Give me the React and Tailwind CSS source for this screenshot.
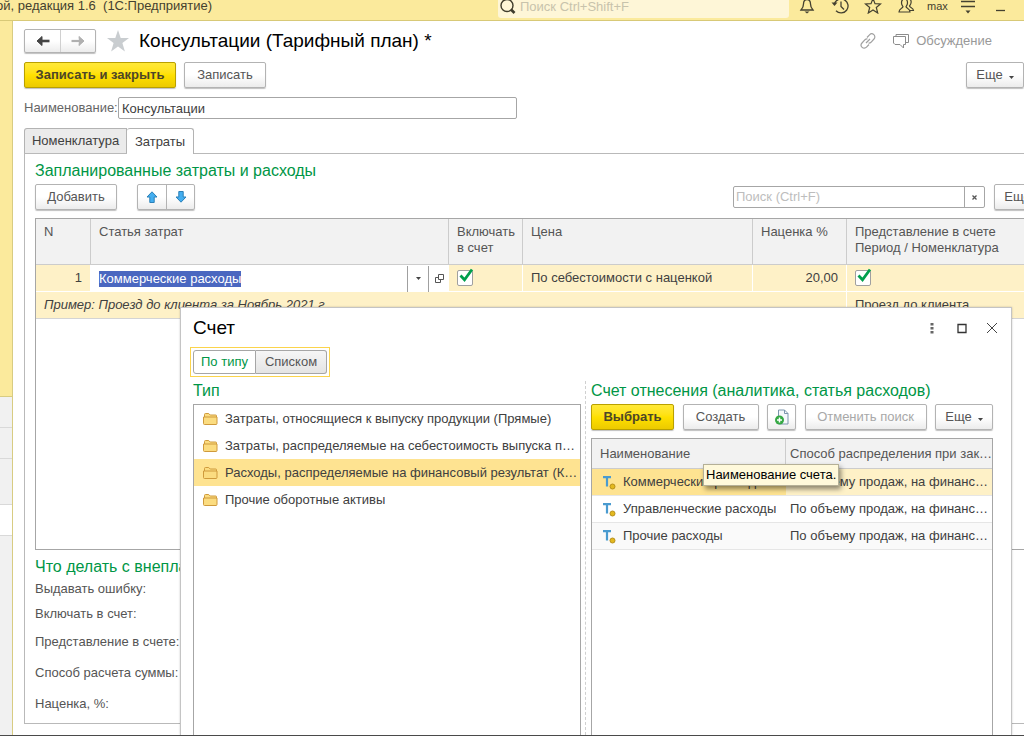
import { useEffect, useRef } from 'react'

const types = [
  'Затраты, относящиеся к выпуску продукции (Прямые)',
  'Затраты, распределяемые на себестоимость выпуска п…',
  'Расходы, распределяемые на финансовый результат (К…',
  'Прочие оборотные активы',
]

const accounts = [
  { name: 'Коммерческие расходы', method: 'По объему продаж, на финанс…' },
  { name: 'Управленческие расходы', method: 'По объему продаж, на финанс…' },
  { name: 'Прочие расходы', method: 'По объему продаж, на финанс…' },
]

const unplanned = [
  { label: 'Выдавать ошибку:', row: 'h-6' },
  { label: 'Включать в счет:', row: 'h-[26px]' },
  { label: 'Представление в счете:', row: 'h-[30px]' },
  { label: 'Способ расчета суммы:', row: 'h-8' },
  { label: 'Наценка, %:', row: 'h-[30px]' },
]

const buttonBase = 'flex h-[26px] shrink-0 items-center justify-center whitespace-nowrap rounded-[2px] border shadow-[0_1px_1px_rgba(0,0,0,0.25)]'
const plain = 'border-[#b3b3b3] bg-linear-to-b from-white from-50% to-[#ececec]'
const primary = 'border-[#b9a000] bg-linear-to-b from-[#ffe937] via-[#ffe000] to-[#ecca00] font-bold text-[#4d4628]'

function Button({ className = '', kind = plain, children, ...rest }) {
  return (
    <button type="button" className={`${buttonBase} ${kind} ${className}`} {...rest}>
      {children}
    </button>
  )
}

function Caret() {
  return (
    <svg className="mt-1 ml-1.5 h-[3px] w-[5px]" viewBox="0 0 5 3" fill="#444">
      <path d="M0 0h5L2.500 3z" />
    </svg>
  )
}

function Check({ label }) {
  return (
    <span className="relative block h-4 w-4">
      <input
        type="checkbox"
        defaultChecked
        aria-label={label}
        className="block h-4 w-4 appearance-none rounded-[2px] border border-[#a0a0a0] bg-white"
      />
      <svg className="pointer-events-none absolute -top-1 left-0 h-5 w-5" viewBox="0 0 20 20" fill="none" stroke="#009f4d" strokeWidth="2.800">
        <path d="M3.500 9.500l4 4.300L15 3.500" />
      </svg>
    </span>
  )
}

function FolderIcon() {
  return (
    <svg className="h-[13px] w-[15px] shrink-0" viewBox="0 0 15 13" fill="#fbdc80" stroke="#cf9a3c">
      <path d="M1.500 6V2.500q0-1 1-1h3.200l1.500 1.500h5.500q.8 0 .8.800V6" />
      <path d="M.5 5h13.500v6.500q0 1-1 1H1.500q-1 0-1-1z" />
    </svg>
  )
}

function AccountIcon() {
  return (
    <svg className="h-4 w-4 shrink-0" viewBox="0 0 16 16">
      <path d="M1 3.200h8M5 3v9.500" fill="none" stroke="#4a9bd0" strokeWidth="2.200" />
      <circle cx="10.500" cy="12.500" r="2.500" fill="#e3b91f" stroke="#b8901a" />
    </svg>
  )
}

function TopBar() {
  return (
    <header className="flex h-[21px] shrink-0 items-start border-b border-[#d8c977] bg-[#fbea9c] text-[#44412f]">
      <div className="-ml-1 w-[502px] shrink-0 leading-3 whitespace-pre">ой, редакция 1.6  (1С:Предприятие)</div>
      <label className="flex h-[18px] flex-1 items-start gap-1 rounded-b-[3px] bg-[#fef6d7] pl-0.5">
        <svg className="-mt-1 h-[18px] w-4 shrink-0" viewBox="0 0 16 18" fill="none" stroke="#3f3c2c">
          <circle cx="7" cy="9.500" r="6" strokeWidth="1.400" />
          <path d="M11 13.500l3.500 3.500" strokeWidth="2.600" />
        </svg>
        <input
          type="search"
          aria-label="Поиск"
          placeholder="Поиск Ctrl+Shift+F"
          className="h-3 min-w-0 flex-1 bg-transparent leading-3 outline-none placeholder:text-[#c8c3ac]"
        />
      </label>
      <nav className="flex w-[235px] shrink-0 items-start gap-[15px] pl-[9px]">
        <button type="button" aria-label="Уведомления">
          <svg className="-mt-1 h-[18px] w-[18px]" viewBox="0 0 18 18" fill="none" stroke="#444130" strokeWidth="1.300">
            <path d="M9 3.500c-2.500 0-3.500 2-3.500 4.500 0 3-1 4-2.500 6h12c-1.500-2-2.500-3-2.500-6 0-2.500-1-4.500-3.500-4.500z" />
            <path d="M6.500 15.500h5L9 17.500z" fill="#444130" stroke="none" />
          </svg>
        </button>
        <button type="button" aria-label="История">
          <svg className="-mt-1 h-[18px] w-[18px]" viewBox="0 0 18 18" fill="none" stroke="#444130" strokeWidth="1.300">
            <path d="M3.500 7.500a7 7 0 1 1 1.500 7.300M10 5.500v5l3 3" />
            <path d="M.5 6.500h6l-3 3.500z" fill="#444130" stroke="none" />
          </svg>
        </button>
        <button type="button" aria-label="Избранное">
          <svg className="-mt-1 h-[18px] w-[18px]" viewBox="0 0 18 18" fill="none" stroke="#444130" strokeWidth="1.200">
            <path d="M9 2.500l2 5.200 5.500.3-4.200 3.500 1.400 5.500L9 14l-4.700 3 1.400-5.500L1.500 8l5.500-.3z" />
          </svg>
        </button>
        <button type="button" aria-label="Пользователи">
          <svg className="-mt-1 h-[18px] w-[18px]" viewBox="0 0 18 18" fill="none" stroke="#444130" strokeWidth="1.200">
            <path d="M7.500 3C5 3 4.500 5 4.500 7c0 1.800.8 2.500 1.500 3.500 0 2-4 1.500-4 5.500h11c0-4-4-3.500-4-5.500.7-1 1.500-1.700 1.500-3.500 0-2-.5-4-3-4z" />
            <path d="M10.500 3.300C13.500 2.500 14.500 4.500 14 7c-.3 1.500-1 2-1.500 3 0 1.500 4 1.500 4 4.500H13" />
          </svg>
        </button>
        <button type="button" className="-mx-[3px] text-[11px] leading-3">max</button>
        <button type="button" aria-label="Меню">
          <svg className="h-[14px] w-4" viewBox="0 0 16 14" stroke="#444130" strokeWidth="1.300">
            <path d="M1 1.500h14M1 6.500h14" />
            <path d="M5.500 10.500h5L8 13.500z" fill="#444130" stroke="none" />
          </svg>
        </button>
        <button type="button" aria-label="Свернуть">
          <svg className="h-[14px] w-4" viewBox="0 0 16 14" stroke="#444130" strokeWidth="1.300">
            <path d="M5 10.500h9" />
          </svg>
        </button>
      </nav>
    </header>
  )
}

function SideStrip() {
  return (
    <aside className="flex w-[13px] shrink-0 flex-col border-r border-[#d8cc82] bg-[#f1f1f1]">
      <div className="h-[376px] border-b border-[#d8cc82] bg-[#fbea9c]" />
      <div className="h-[31px] border-b border-[#d9d9d9]" />
      <div className="h-[31px] border-b border-[#d9d9d9]" />
      <div className="h-[46px] border-b border-[#d9d9d9]" />
      <div className="h-[31px] border-b border-[#d9d9d9] bg-white" />
    </aside>
  )
}

function CostTable() {
  const inputRef = useRef(null)

  useEffect(() => {
    inputRef.current?.focus()
    inputRef.current?.select()
  }, [])

  const th = 'border-r border-b border-[#cccccc] px-2 pt-[5px] text-left align-top font-normal leading-4 text-[#555]'
  const td = 'border-r border-b border-white px-2'

  return (
    <div className="flex-1 border border-[#a6a6a6]">
      <table className="w-full table-fixed border-separate border-spacing-0">
        <colgroup>
          <col className="w-[55px]" />
          <col className="w-[358px]" />
          <col className="w-[74px]" />
          <col className="w-[230px]" />
          <col className="w-[94px]" />
          <col />
        </colgroup>
        <thead className="h-[46px] bg-[#f2f2f2]">
          <tr>
            <th className={th}>N</th>
            <th className={th}>Статья затрат</th>
            <th className={th}>Включать<br />в счет</th>
            <th className={th}>Цена</th>
            <th className={th}>Наценка %</th>
            <th className={`${th} whitespace-nowrap`}>Представление в счете<br />Период / Номенклатура</th>
          </tr>
        </thead>
        <tbody className="bg-[#fef1c7] text-[#404040]">
          <tr className="h-[27px]">
            <td className={`${td} text-right`}>1</td>
            <td className="bg-white p-0">
              <div className="flex h-[26px]">
                <input
                  ref={inputRef}
                  aria-label="Статья затрат"
                  defaultValue="Коммерческие расходы"
                  className="min-w-0 flex-1 px-2 outline-none selection:bg-[#4a67c0] selection:text-white"
                />
                <button type="button" aria-label="Выбрать из списка" className="flex w-[21px] items-center justify-center border-l border-[#a0a0a0]">
                  <svg className="h-[3px] w-[5px]" viewBox="0 0 5 3" fill="#444"><path d="M0 0h5L2.500 3z" /></svg>
                </button>
                <button type="button" aria-label="Открыть" className="flex w-[21px] items-center justify-center border-l border-[#a0a0a0]">
                  <svg className="h-[9px] w-[9px]" viewBox="0 0 9 9" fill="none" stroke="#555">
                    <path d="M3.500.5h5v5h-5zM3.500 3.500h-3v5h5v-3" />
                  </svg>
                </button>
              </div>
            </td>
            <td className={td}><Check label="Включать в счет" /></td>
            <td className={td}>По себестоимости с наценкой</td>
            <td className={`${td} text-right`}>20,00</td>
            <td className={td}><Check label="Представление в счете" /></td>
          </tr>
          <tr className="h-[27px]">
            <td colSpan={5} className="border-r border-b border-r-white border-b-[#d4d4d4] px-2 italic">Пример: Проезд до клиента за Ноябрь 2021 г.</td>
            <td className="border-b border-[#d4d4d4] px-2">Проезд до клиента</td>
          </tr>
        </tbody>
      </table>
    </div>
  )
}

function AccountDialog() {
  return (
    <section
      role="dialog"
      aria-label="Счет"
      className="absolute top-[307px] right-3 bottom-0 left-[180px] flex flex-col border border-b-0 border-[#c4c4c4] bg-white shadow-[0_0_2px_rgba(0,0,0,0.2)]"
    >
      <div className="flex h-[39px] shrink-0 items-center justify-between pr-[13px] pl-3">
        <h2 className="text-[19px] text-black">Счет</h2>
        <div className="flex items-center gap-[18px]">
          <button type="button" aria-label="Еще">
            <svg className="h-3 w-3" viewBox="0 0 12 12" fill="#666">
              <path d="M4.500 1h3v2.500h-3zM4.500 5h3v2.500h-3zM4.500 9h3v2.500h-3z" />
            </svg>
          </button>
          <button type="button" aria-label="Развернуть">
            <svg className="h-3 w-3" viewBox="0 0 12 12" fill="none" stroke="#333" strokeWidth="1.300"><path d="M2 2.500h8v8H2z" /></svg>
          </button>
          <button type="button" aria-label="Закрыть">
            <svg className="h-3 w-3" viewBox="0 0 12 12" stroke="#444"><path d="M1 1l10 10M11 1L1 11" /></svg>
          </button>
        </div>
      </div>

      <div className="ml-[9px] flex shrink-0 self-start border border-[#fbd44c] p-0.5">
        <button type="button" className="h-6 w-[63px] rounded-l-[3px] border border-[#a6a6a6] bg-white text-[#009646]">По типу</button>
        <button type="button" className="h-6 w-[71px] rounded-r-[3px] border border-l-0 border-[#a6a6a6] bg-linear-to-b from-[#f6f6f6] to-[#e4e4e4]">Списком</button>
      </div>

      <div className="mt-1 flex min-h-0 flex-1 pr-[18px] pl-3">
        <div className="flex min-w-0 flex-[388] flex-col">
          <h3 className="h-[23px] text-[16px] leading-5 text-[#009646]">Тип</h3>
          <ul className="flex-1 border border-b-0 border-[#a6a6a6] text-[#404040]">
            {types.map((t, i) => (
              <li key={t} className={`flex h-[27px] items-center gap-[7px] pl-[9px] ${i === 2 ? 'bg-[#fee391]' : ''}`}>
                <FolderIcon />
                <span className="min-w-0 overflow-hidden whitespace-nowrap">{t}</span>
              </li>
            ))}
          </ul>
        </div>
        <div className="mr-[5px] ml-1 w-px border-l border-dashed border-[#d0d0d0]" />
        <div className="flex min-w-0 flex-[402] flex-col">
          <h3 className="h-[23px] truncate text-[16px] leading-5 text-[#009646]">Счет отнесения (аналитика, статья расходов)</h3>
          <div className="flex shrink-0 justify-between">
            <Button kind={primary} className="w-[83px]">Выбрать</Button>
            <Button className="w-[76px]">Создать</Button>
            <Button className="w-[29px]" aria-label="Создать группу">
              <svg className="h-4 w-4" viewBox="0 0 16 16" fill="none">
                <path d="M4.500 1h6l3.500 3.500V15H4.500zM10.500 1v3.500H14" fill="#f5f8fb" stroke="#7b95ad" />
                <circle cx="5.500" cy="11" r="4.500" fill="#35a845" />
                <path d="M5.500 8.500v5M3 11h5" stroke="#fff" strokeWidth="1.500" />
              </svg>
            </Button>
            <Button className="w-[122px] text-[#a8a8a8]" disabled>Отменить поиск</Button>
            <Button className="w-[58px]">Еще<Caret /></Button>
          </div>
          <div className="relative mt-2 flex-1 border border-b-0 border-[#a6a6a6]">
            <table className="w-full table-fixed border-separate border-spacing-0">
              <colgroup>
                <col className="w-[194px]" />
                <col />
              </colgroup>
              <thead className="h-[30px] bg-[#f2f2f2] text-[#555]">
                <tr>
                  <th className="border-r border-b border-[#cccccc] px-2 text-left font-normal">Наименование</th>
                  <th className="overflow-hidden border-b border-[#cccccc] pl-1 text-left font-normal whitespace-nowrap">Способ распределения при зак…</th>
                </tr>
              </thead>
              <tbody className="text-[#404040]">
                {accounts.map((a, i) => (
                  <tr key={a.name} className={`h-[27px] ${i === 0 ? 'bg-[#fef1c7]' : i === 2 ? 'bg-[#fafafa]' : ''}`}>
                    <td className={`border-b border-[#e6e6e6] pr-1 pl-2.5 ${i === 0 ? 'bg-[#fee391]' : ''}`}>
                      <span className="flex items-center gap-[5px]">
                        <AccountIcon />
                        <span className="truncate">{a.name}</span>
                      </span>
                    </td>
                    <td className="overflow-hidden border-b border-[#e6e6e6] pl-1 whitespace-nowrap">{a.method}</td>
                  </tr>
                ))}
              </tbody>
            </table>
            <div role="tooltip" className="absolute top-[25px] left-[111px] h-[22px] border border-[#b5b097] bg-[#fff9db] px-0.5 leading-5 whitespace-nowrap text-black shadow-[2px_3px_5px_rgba(0,0,0,0.45)]">
              Наименование счета.
            </div>
          </div>
        </div>
      </div>
    </section>
  )
}

export default function App() {
  return (
    <div className="relative flex h-screen flex-col overflow-hidden border-b border-[#4a4a4a] bg-white font-['Liberation_Sans',Arial,sans-serif] text-[13px] leading-4 text-[#555]">
      <TopBar />
      <div className="flex min-h-0 flex-1">
        <SideStrip />
        <main className="flex min-w-0 flex-1 flex-col gap-[9px] pt-2 pb-[11px] pl-[11px]">
          <div className="flex h-6 shrink-0 items-center pr-8">
            <div className="flex rounded-[2px] border border-[#b3b3b3] bg-linear-to-b from-white from-50% to-[#ececec] shadow-[0_1px_1px_rgba(0,0,0,0.25)]">
              <button type="button" aria-label="Назад" className="flex h-[22px] w-9 items-center justify-center border-r border-[#d0d0d0]">
                <svg className="h-3 w-[14px]" viewBox="0 0 14 12" fill="#444" stroke="#444"><path d="M5 6h8.500" strokeWidth="2.600" /><path d="M1 6l5-4.500v9z" /></svg>
              </button>
              <button type="button" aria-label="Вперед" className="flex h-[22px] w-[34px] items-center justify-center">
                <svg className="h-3 w-[14px]" viewBox="0 0 14 12" fill="#b0b0b0" stroke="#b0b0b0"><path d="M.5 6H9" strokeWidth="2.200" /><path d="M13 6L8 1.500 8.500 6 8 10.500z" /></svg>
              </button>
            </div>
            <button type="button" aria-label="В избранное" className="ml-[10px]">
              <svg className="h-6 w-6" viewBox="0 0 24 24" fill="#c9cdd0"><path d="M12 1l2.700 8H23l-6.600 5 2.500 8.500-6.900-5-6.900 5L7.600 14 1 9h8.300z" /></svg>
            </button>
            <h1 className="ml-[9px] text-[19px] text-black">Консультации (Тарифный план) *</h1>
            <button type="button" aria-label="Ссылка" className="ml-auto">
              <svg className="h-4 w-4" viewBox="0 0 16 16" fill="none" stroke="#a0a0a0" strokeWidth="1.200">
                <path d="M7 4.500l2.500-2.700a3 3 0 0 1 4.500 4.200L11 9.300a3 3 0 0 1-2.500.7M9 11.500l-2.500 2.700a3 3 0 0 1-4.500-4.200L5 6.700A3 3 0 0 1 7.500 6M6 10l4-4" />
              </svg>
            </button>
            <button type="button" className="ml-[17px] flex items-center gap-[7px] text-[#999]">
              <svg className="h-4 w-4" viewBox="0 0 16 16" fill="none" stroke="#8c8c8c">
                <path d="M.5 3.500h12v8h-2v3.500l-3.500-3.500H2L.5 10z" />
                <path d="M3 3.500v-2h12.500v8h-3" />
              </svg>
              Обсуждение
            </button>
          </div>

          <div className="flex shrink-0">
            <Button kind={primary} className="w-[152px]">Записать и закрыть</Button>
            <Button className="ml-2 w-[82px]">Записать</Button>
            <Button className="ml-auto w-[58px]">Еще<Caret /></Button>
          </div>

          <div className="flex shrink-0 items-center">
            <label htmlFor="name" className="w-[94px] text-[#666]">Наименование:</label>
            <input id="name" defaultValue="Консультации" className="h-[22px] w-[399px] rounded-[2px] border border-[#a6a6a6] px-[3px] text-[#404040] outline-none" />
          </div>

          <div className="-mr-10 flex min-h-0 flex-1 flex-col">
            <div role="tablist" className="flex shrink-0 text-[#404040]">
              <button type="button" role="tab" aria-selected="false" className="h-[25px] w-[103px] rounded-tl-[3px] border border-b-0 border-[#b3b3b3] bg-[#ebebeb]">Номенклатура</button>
              <button type="button" role="tab" aria-selected="true" className="z-10 -mb-px h-[26px] w-[67px] rounded-t-[3px] border border-b-0 border-l-0 border-[#b3b3b3] bg-white">Затраты</button>
            </div>
            <div className="flex min-h-0 flex-1 flex-col border border-[#b9b9b9] pt-[7px] pr-[11px] pb-1 pl-[10px]">
              <h2 className="text-[16px] leading-5 text-[#009646]">Запланированные затраты и расходы</h2>
              <div className="mt-[3px] mb-2 flex items-center">
                <Button className="w-[82px]">Добавить</Button>
                <div className="ml-5 flex rounded-[2px] border border-[#b3b3b3] bg-linear-to-b from-white from-50% to-[#ececec] shadow-[0_1px_1px_rgba(0,0,0,0.25)]">
                  <button type="button" aria-label="Вверх" className="flex h-6 w-[29px] items-center justify-center border-r border-[#b3b3b3]">
                    <svg className="h-3 w-3" viewBox="0 0 12 12" fill="#43aef0" stroke="#2b80b8"><path d="M6 .8l5 5.200H8.200v5.500H3.800V6H1z" /></svg>
                  </button>
                  <button type="button" aria-label="Вниз" className="flex h-6 w-[27px] items-center justify-center">
                    <svg className="h-3 w-3" viewBox="0 0 12 12" fill="#43aef0" stroke="#2b80b8"><path d="M6 11.200L1 6h2.800V.5h4.400V6H11z" /></svg>
                  </button>
                </div>
                <div className="ml-auto flex h-[22px] w-[252px] rounded-[2px] border border-[#a6a6a6]">
                  <input type="search" aria-label="Поиск" placeholder="Поиск (Ctrl+F)" className="min-w-0 flex-1 px-0.5 outline-none placeholder:text-[#bdbdbd]" />
                  <button type="button" aria-label="Очистить" className="flex w-5 items-center justify-center border-l border-[#a6a6a6]">
                    <svg className="h-[5px] w-[5px]" viewBox="0 0 5 5" stroke="#555" strokeWidth="1.300"><path d="M.5.5l4 4M4.500.5l-4 4" /></svg>
                  </button>
                </div>
                <Button className="ml-[9px] w-[58px]">Еще<Caret /></Button>
              </div>
              <CostTable />
              <h2 className="mt-[7px] text-[16px] leading-5 text-[#009646]">Что делать с внеплановыми затратами</h2>
              {unplanned.map(u => (
                <div key={u.label} className={`flex shrink-0 items-center ${u.row}`}>{u.label}</div>
              ))}
            </div>
          </div>
        </main>
      </div>
      <AccountDialog />
    </div>
  )
}
